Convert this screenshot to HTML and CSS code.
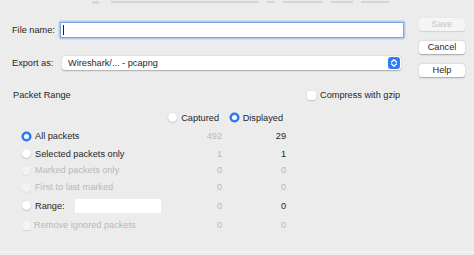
FILE: index.html
```html
<!DOCTYPE html>
<html lang="en">
<head>
    <meta charset="UTF-8">
    <title>Export Specified Packets</title>
    <link rel="stylesheet" href="styles.css">
</head>
<body>
    <!-- blurred edge of the window behind the sheet -->
    <div class="behind">
        <span class="behind-icon"></span>
        <span class="behind-bar" style="width: 148px"></span>
        <span class="behind-bar" style="width: 8px"></span>
        <span class="behind-bar" style="width: 40px"></span>
        <span class="behind-bar" style="width: 22px"></span>
        <span class="behind-bar" style="width: 28px"></span>
    </div>

    <div class="dialog">
        <div class="top">
            <div class="fields">
                <label class="label" for="filename">File name:</label>
                <div class="input focused"><span class="caret"></span></div>

                <div class="label">Export as:</div>
                <div class="select">
                    <span>Wireshark/... - pcapng</span>
                    <span class="stepper">
                        <svg width="8" height="10" viewBox="0 0 8 10">
                            <path d="M1.6 4 L4 1.8 L6.4 4 M1.6 6 L4 8.2 L6.4 6" fill="none" stroke="#fff" stroke-width="1.3" stroke-linecap="round" stroke-linejoin="round"/>
                        </svg>
                    </span>
                </div>
            </div>
            <div class="buttons">
                <div class="btn disabled">Save</div>
                <div class="btn">Cancel</div>
                <div class="btn">Help</div>
            </div>
        </div>

        <div class="section-head">
            <div class="section-title">Packet Range</div>
            <div class="check-item">
                <span class="checkbox"></span>
                <span>Compress with gzip</span>
            </div>
        </div>

        <div class="range">
            <div class="cell"></div>
            <div class="cell head"><span class="radio"></span>Captured</div>
            <div class="cell head"><span class="radio on"></span>Displayed</div>

            <div class="cell"><span class="radio on"></span>All packets</div>
            <div class="cell num dim">492</div>
            <div class="cell num">29</div>

            <div class="cell"><span class="radio"></span>Selected packets only</div>
            <div class="cell num dim">1</div>
            <div class="cell num">1</div>

            <div class="cell dim"><span class="radio off"></span>Marked packets only</div>
            <div class="cell num dim">0</div>
            <div class="cell num dim">0</div>

            <div class="cell dim"><span class="radio off"></span>First to last marked</div>
            <div class="cell num dim">0</div>
            <div class="cell num dim">0</div>

            <div class="cell"><span class="radio"></span>Range:<span class="range-field"></span></div>
            <div class="cell num dim">0</div>
            <div class="cell num">0</div>

            <div class="cell dim"><span class="checkbox off"></span>Remove ignored packets</div>
            <div class="cell num dim">0</div>
            <div class="cell num dim">0</div>
        </div>
    </div>
</body>
</html>
```

FILE: styles.css
```css
body {
    margin: 0;
    width: 474px;
    height: 255px;
    overflow: hidden;
    background-color: #ececec;
    font-family: "Liberation Sans", Arial, sans-serif;
    font-size: 9.2px;
    color: #262626;
}
.behind {
    height: 5px;
    display: flex;
    align-items: flex-start;
    padding: 1px 0 0 92px;
    box-sizing: border-box;
    gap: 8px;
}
.behind-icon {
    width: 7px;
    height: 3px;
    border-radius: 1px;
    background-color: #d6d6d6;
    margin-right: 4px;
}
.behind-bar {
    height: 2px;
    background-color: #d4d4d4;
    filter: blur(0.5px);
}
.dialog {
    border-bottom: 2px solid #f4f4f4;
    height: 248px;
    box-sizing: border-box;
}
.top {
    display: flex;
    padding-right: 9px;
}
.fields {
    flex: 1;
    display: grid;
    grid-template-columns: 46px 1fr;
    grid-template-rows: 18px 14px;
    row-gap: 17px;
    align-items: center;
    padding: 16px 0 0 12px;
}
.label {
    white-space: nowrap;
}
.input {
    height: 14px;
    margin: 0 2px;
    background-color: white;
    border: 1px solid #7fa3e4;
    box-shadow: 0 0 0 1.5px #b3c9f0;
    border-radius: 1px;
    display: flex;
    align-items: center;
    padding-left: 2px;
}
.caret {
    width: 1px;
    height: 10px;
    background-color: #222;
}
.select {
    height: 14px;
    margin-left: 4px;
    margin-right: 5px;
    background-color: white;
    border-radius: 3px;
    box-shadow: 0 0.5px 1.5px rgba(0,0,0,0.28);
    display: flex;
    align-items: center;
    justify-content: space-between;
    padding: 0 1px 0 6px;
}
.stepper {
    width: 12px;
    height: 12px;
    border-radius: 3px;
    background-color: #2f7cf6;
    display: flex;
    align-items: center;
    justify-content: center;
}
.buttons {
    width: 46px;
    margin-left: 13px;
    padding-top: 13px;
    display: flex;
    flex-direction: column;
    gap: 10px;
}
.btn {
    height: 13px;
    line-height: 13px;
    text-align: center;
    background-color: white;
    border-radius: 3px;
    box-shadow: 0 0.5px 1.5px rgba(0,0,0,0.3);
}
.btn.disabled {
    background-color: #f5f5f5;
    color: #c4c4c4;
    box-shadow: 0 0.5px 1px rgba(0,0,0,0.12);
}
.section-head {
    display: flex;
    align-items: center;
    height: 18px;
    margin-top: 9px;
    padding-left: 13px;
}
.section-title {
    width: 294px;
}
.check-item {
    display: flex;
    align-items: center;
    gap: 1px;
}
.checkbox {
    display: inline-block;
    width: 9px;
    height: 9px;
    border-radius: 2px;
    background-color: white;
    box-shadow: 0 0.5px 1.2px rgba(0,0,0,0.3);
    margin-right: 3px;
}
.checkbox.off {
    background-color: #f3f3f3;
    box-shadow: 0 0.5px 1px rgba(0,0,0,0.1);
}
.range {
    display: grid;
    grid-template-columns: 150px 50px 64px;
    grid-template-rows: 19px 18px 17px 16px 18px 19px 20px;
    align-items: center;
    margin-top: 4px;
    padding-left: 22px;
}
.cell {
    display: flex;
    align-items: center;
    white-space: nowrap;
}
.cell.head {
    justify-self: end;
    padding-right: 3px;
}
.num {
    justify-content: flex-end;
}
.dim {
    color: #b9b9b9;
}
.radio {
    display: inline-block;
    width: 9px;
    height: 9px;
    border-radius: 50%;
    background-color: white;
    box-shadow: 0 0.5px 1.2px rgba(0,0,0,0.3);
    margin-right: 4px;
    box-sizing: border-box;
}
.radio.on {
    border: 2.8px solid #2f7cf6;
    background: white;
    box-shadow: 0 0 0 0.5px #2a6fe0;
}
.radio.off {
    background-color: #f3f3f3;
    box-shadow: 0 0.5px 1px rgba(0,0,0,0.1);
}
.range-field {
    display: inline-block;
    width: 86px;
    height: 14px;
    margin-left: 10px;
    background-color: white;
    box-shadow: 0 0 0.5px rgba(0,0,0,0.25);
}
```
